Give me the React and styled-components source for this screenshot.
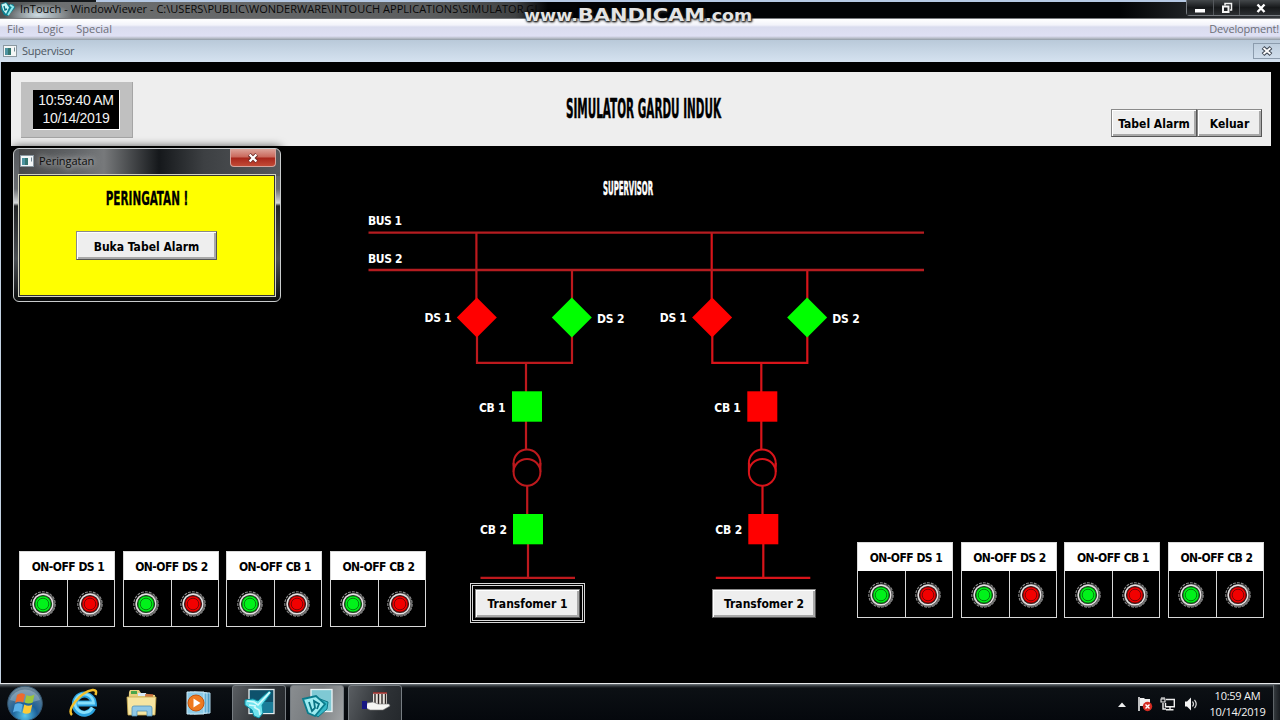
import styled, { createGlobalStyle, css } from "styled-components";

const ui = `"Open Sans", "Noto Sans", sans-serif`;
const bold = `"DejaVu Sans Condensed", "DejaVu Sans", sans-serif`;

const App = () => {
    return (
        <>
        <GlobalStyle />
        <Screen>
            <TitleBar>
                <ViewerLogo />
                <TitleText>InTouch - WindowViewer - C:\USERS\PUBLIC\WONDERWARE\INTOUCH APPLICATIONS\SIMULATOR GI</TitleText>
                <WindowControls />
                <Watermark><Small>www.</Small>BANDICAM<Small>.com</Small></Watermark>
            </TitleBar>

            <MenuBar>
                <MenuItem>File</MenuItem>
                <MenuItem>Logic</MenuItem>
                <MenuItem>Special</MenuItem>
                <MenuItem $right>Development!</MenuItem>
            </MenuBar>

            <ChildBar>
                <WindowIcon />
                <ChildTitle>Supervisor</ChildTitle>
                <ChildClose>
                    <svg width="12" height="10" viewBox="0 0 12 10">
                        <path d="M2 1.500l8 7M10 1.500l-8 7" stroke="#3f4753" strokeWidth="4" />
                        <path d="M2.500 2l7 6M9.500 2l-7 6" stroke="#fff" strokeWidth="1.8" />
                    </svg>
                </ChildClose>
            </ChildBar>

            <Stage>
                <Header>
                    <ClockPanel>
                        <ClockFace>
                            <span>10:59:40 AM</span>
                            <span>10/14/2019</span>
                        </ClockFace>
                    </ClockPanel>
                    <Heading>SIMULATOR GARDU INDUK</Heading>
                    <HeaderButtons>
                        <PushButton $width={86}>Tabel Alarm</PushButton>
                        <PushButton $width={65}>Keluar</PushButton>
                    </HeaderButtons>
                </Header>

                <Mimic>
                    <Diagram />
                    <PanelRow $left={18} $top={405}>
                        <Switches />
                    </PanelRow>
                    <PanelRow $left={856} $top={396}>
                        <Switches />
                    </PanelRow>
                </Mimic>

                <WarningDialog />
            </Stage>

            <Taskbar />
        </Screen>
        </>
    );
};

const Diagram = () => (
    <DiagramColumn>
        <svg width="556" height="437" viewBox="368 146 556 437">
            <SvgLabel x="603" y="194.5" $size={19} $heavy textLength="50" lengthAdjust="spacingAndGlyphs">SUPERVISOR</SvgLabel>
            <SvgLabel x="368" y="225" textLength="34">BUS 1</SvgLabel>
            <SvgLabel x="368" y="263" textLength="34.5">BUS 2</SvgLabel>
            <Bay offset={0} wire="#bd191d" ds1="#ff0000" ds2="#00ff00" cb="#00ff00" />
            <Bay offset={235.3} wire="#d8141a" ds1="#ff0000" ds2="#00ff00" cb="#ff0000" />
            <path d="M368.5 232.6H924.5M368.5 270H924.5" stroke="#b51c20" strokeWidth="2.4" />
        </svg>
        <BayButtons>
            <FocusFrame><PushButton $width={105} $tall>Transfomer 1</PushButton></FocusFrame>
            <PushButton $width={104} $tall>Transfomer 2</PushButton>
        </BayButtons>
    </DiagramColumn>
);

const Bay = ({ offset, wire, ds1, ds2, cb }) => (
    <g transform={`translate(${offset} 0)`}>
        <g fill="none" stroke={wire} strokeWidth="2.2">
            <path d="M476.4 232V300M572 270V300" />
            <path d="M477 335V362.8H572V335" />
            <path d="M526 363V392M526 421V450M527.2 486V515M528 543V578" />
            <path d="M480.5 577.8H575" />
            <circle cx="527" cy="463" r="13.4" strokeWidth="2" />
            <path d="M513.600 463v9M540.400 463v9" strokeWidth="2" />
            <circle cx="527" cy="472.3" r="13.4" strokeWidth="2" fill="#000" />
        </g>
        <path d="M476.8 297.5l20 20-20 20-20-20z" fill={ds1} />
        <path d="M571.8 297.5l20 20-20 20-20-20z" fill={ds2} />
        <rect x="512" y="391.3" width="30" height="30.4" fill={cb} />
        <rect x="513" y="514" width="30" height="30.3" fill={cb} />
        <SvgLabel x="424.5" y="322" textLength="27">DS 1</SvgLabel>
        <SvgLabel x="597" y="323" textLength="27.5">DS 2</SvgLabel>
        <SvgLabel x="479" y="411.5" textLength="26.5">CB 1</SvgLabel>
        <SvgLabel x="480" y="534" textLength="27">CB 2</SvgLabel>
    </g>
);

const Switches = () => (
    <>
        {["DS 1", "DS 2", "CB 1", "CB 2"].map((name) => (
            <SwitchPanel key={name}>
                <SwitchTitle>ON-OFF {name}</SwitchTitle>
                <SwitchCells>
                    <Cell><Lamp light="#00f21a" dark="#087c10" /></Cell>
                    <Cell><Lamp light="#f20000" dark="#780808" /></Cell>
                </SwitchCells>
            </SwitchPanel>
        ))}
    </>
);

const Lamp = ({ light, dark }) => (
    <svg width="28" height="28" viewBox="0 0 28 28">
        <circle cx="14" cy="14" r="12.2" fill="none" stroke="#8b8b8b" strokeWidth="1.1" strokeDasharray="3 1" />
        <circle cx="14.6" cy="14.4" r="10.8" fill="#292929" stroke="#777" strokeWidth="1.2" />
        <circle cx="14" cy="14" r="9.8" fill="#222" stroke="#e6e2e2" strokeWidth="1.4" />
        <circle cx="14" cy="14" r="8" fill={light} stroke={dark} strokeWidth="1" />
        <circle cx="14" cy="14" r="5.8" fill={light} stroke={dark} strokeWidth="1" />
    </svg>
);

const WarningDialog = () => (
    <Dialog>
        <DialogBar>
            <WindowIcon />
            <DialogTitle>Peringatan</DialogTitle>
            <DialogClose>
                <svg width="12" height="10" viewBox="0 0 12 10">
                    <path d="M2.3 1.5l7.4 7M9.7 1.5l-7.4 7" stroke="#6b2a26" strokeWidth="4" />
                    <path d="M2.6 1.5l6.8 7M9.4 1.5l-6.8 7" stroke="#fff" strokeWidth="2.3" />
                </svg>
            </DialogClose>
        </DialogBar>
        <DialogBody>
            <DialogHeading>PERINGATAN !</DialogHeading>
            <PushButton $width={141} $tall>Buka Tabel Alarm</PushButton>
        </DialogBody>
    </Dialog>
);

const ViewerLogo = () => (
    <svg width="16" height="16" viewBox="0 0 16 16">
        <path d="M1 3l5-2 3 3 4-1 2 4-7 8-4-1-3-6z" fill="#0c7f90" />
        <path d="M1.5 3.5L6 2l3 4.5-3 6.5-3-4z" fill="#c9f6f6" />
        <path d="M4 5l1 4 2-1" fill="none" stroke="#08707f" strokeWidth="1.4" />
        <path d="M10 4l3 2-5 8" fill="none" stroke="#8ee9ec" strokeWidth="2" />
    </svg>
);

const WindowIcon = () => (
    <svg width="14" height="12" viewBox="0 0 14 12">
        <rect x=".5" y=".5" width="13" height="11" fill="#f3f6f6" stroke="#8b98a0" />
        <rect x="2" y="3" width="6" height="7" fill="#34766f" />
        <rect x="2" y="3" width="3" height="7" fill="#4d93a0" />
        <path d="M11.5 2.5v4" stroke="#6f8792" />
    </svg>
);

const WindowControls = () => (
    <Controls>
        <Control $width={27}>
            <svg width="12" height="12" viewBox="0 0 12 12"><rect x="1" y="7" width="10" height="3.5" fill="#fff" /></svg>
        </Control>
        <Control $width={26}>
            <svg width="12" height="12" viewBox="0 0 12 12" fill="none" stroke="#f4f4f4">
                <path d="M4 3.5V1.5h6.5V8H9" strokeWidth="1.5" />
                <rect x="2" y="4.5" width="5.5" height="5.5" strokeWidth="2" />
            </svg>
        </Control>
        <Control $width={42}>
            <svg width="12" height="12" viewBox="0 0 12 12"><path d="M2.5 2.5l7 7.5M9.5 2.5l-7 7.5" stroke="#fff" strokeWidth="2.4" /></svg>
        </Control>
    </Controls>
);

const Taskbar = () => (
    <Bar>
        <Pinned>
            <StartOrb />
            <ExplorerE />
            <FolderIcon />
            <PlayerIcon />
        </Pinned>
        <Tasks>
            <Task>
                <svg width="32" height="32" viewBox="0 0 32 32">
                    <rect x="6" y="1.5" width="25" height="24" fill="#0e526c" stroke="#e6eef0" strokeWidth="1.3" />
                    <path d="M7 14h23v11H7z" fill="#1a7c98" />
                    <path d="M2 12l8-1 5 2 11-10 2 2-9 12 1 8-4 5-5-2-2-6-7-5z" fill="#6ee3ee" stroke="#0a8ba0" />
                    <path d="M4 13l7 1 4 3L27 4M11 19l5 3 1 5M6 17l7 1" fill="none" stroke="#d4fbfc" strokeWidth="1.6" />
                </svg>
            </Task>
            <Task $active>
                <svg width="32" height="32" viewBox="0 0 32 32">
                    <rect x="10" y="1.5" width="21" height="22" fill="#7fc9d4" stroke="#eef6f7" strokeWidth="1.3" />
                    <path d="M19 11l8 3-1 7-9 8-4-3z" fill="#35b7c7" stroke="#0d7787" />
                    <path d="M2 11l13-3 9 8-10 12-7-3z" fill="#9decf1" stroke="#0a7c8d" strokeWidth="1.8" />
                    <path d="M8 14l3 9 3-3-1-7 5 3-2 5" fill="none" stroke="#0a7384" strokeWidth="1.8" />
                </svg>
            </Task>
            <Task>
                <svg width="32" height="32" viewBox="0 0 32 32">
                    <path d="M14 5h14v13H14z" fill="#e6e2dc" />
                    <path d="M16 6v12M19.5 6v12M23 6v12M26.5 6v12" stroke="#2c2624" strokeWidth="1.4" />
                    <path d="M14 5h14" stroke="#a3332f" strokeWidth="1.6" />
                    <path d="M8 15l6-1 5 2 11 0 1 2-7 4H11l-4-2z" fill="#f5f5f2" stroke="#777" strokeWidth=".6" />
                    <path d="M3 13h5v8H3z" fill="#161682" />
                </svg>
            </Task>
        </Tasks>
        <Tray>
            <svg width="10" height="8" viewBox="0 0 10 8"><path d="M1 7l4-4.5L9 7z" fill="#eee" /></svg>
            <svg width="16" height="16" viewBox="0 0 16 16">
                <path d="M2 1v14" stroke="#eee" strokeWidth="1.6" />
                <path d="M3 2h4l1 1h5v7H3z" fill="#eee" />
                <circle cx="10.5" cy="10.5" r="4.7" fill="#d52c22" />
                <path d="M8.5 8.5l4 4M12.5 8.5l-4 4" stroke="#fff" strokeWidth="1.4" />
            </svg>
            <svg width="16" height="16" viewBox="0 0 16 16" fill="none" stroke="#eee" strokeWidth="1.4">
                <path d="M6 3.5h8.3v7.2H5.5V7M10 11v2.5M6 13.8h7.5M3 7v6h3" />
                <path d="M1 3h4v3H1zM2 1v2M4 1v2" strokeWidth="1.1" />
            </svg>
            <svg width="16" height="16" viewBox="0 0 16 16" fill="none" stroke="#ddd">
                <path d="M2 5.5h2l4-4v13l-4-4H2z" fill="#f4f4f4" stroke="none" />
                <path d="M9.5 5.5q2 2.5 0 5M11.5 3.8q3.4 4.2 0 8.4" strokeWidth="1.2" />
            </svg>
        </Tray>
        <TrayClock>
            <span>10:59 AM</span>
            <span>10/14/2019</span>
        </TrayClock>
        <ShowDesktop />
    </Bar>
);

const StartOrb = () => (
    <svg width="38" height="36" viewBox="0 0 38 36">
        <defs>
            <radialGradient id="orb" cx=".5" cy=".85" r=".8">
                <stop offset="0" stopColor="#58c8ee" />
                <stop offset=".45" stopColor="#1c5f97" />
                <stop offset="1" stopColor="#6e8798" />
            </radialGradient>
        </defs>
        <circle cx="19" cy="18.5" r="17.3" fill="url(#orb)" stroke="#35566f" />
        <path d="M4 15a15.5 14 0 0 1 30 0q-15 5-30 0z" fill="#c6d9e3" opacity=".35" />
        <path d="M11 10q4-3 8-.5l-1.800 8q-4-2-8 .5z" fill="#ee6a2c" />
        <path d="M20.500 10q4 2 8-.5l-1.800 8q-4 2-8 0z" fill="#9cc63c" />
        <path d="M8.800 19.500q4-2.500 8 0l-1.800 8q-4-2.500-8 0z" fill="#5bb0e8" />
        <path d="M18.300 19.500q4 2.500 8 0l-1.800 8q-4 2.500-8 0z" fill="#fccb37" />
    </svg>
);

const ExplorerE = () => (
    <svg width="32" height="32" viewBox="0 0 32 32">
        <path d="M25 21a9.500 9.500 0 1 1 .8-4.500H9" fill="none" stroke="#2ba3e0" strokeWidth="6" />
        <path d="M24.500 20.500a9.200 9.200 0 1 1 1-4.500H9.500" fill="none" stroke="#86dffb" strokeWidth="2.8" />
        <path d="M4 28Q0 24 7 15 16 4 24.500 3q5-.5 3 5" fill="none" stroke="#f3c02d" strokeWidth="2.500" />
    </svg>
);

const FolderIcon = () => (
    <svg width="32" height="30" viewBox="0 0 32 30">
        <path d="M3 4l1-2h9l2 3 14 2v19H2z" fill="#e8cf7e" />
        <path d="M5 3h6v3H5z" fill="#47a64a" />
        <path d="M12 5h8v3h-8z" fill="#d8e9f6" />
        <path d="M19 6h8v4h-8z" fill="#c3562c" opacity=".7" />
        <path d="M1 9h29l-1 18H2z" fill="#f6e5a1" stroke="#c9a94e" strokeWidth=".8" />
        <path d="M6 28v-8q0-2 2-2h16q2 0 2 2v8h-5v-5H11v5z" fill="#8fc8e6" stroke="#4f91b8" strokeWidth=".8" />
    </svg>
);

const PlayerIcon = () => (
    <svg width="26" height="26" viewBox="0 0 26 26">
        <path d="M8 2l16 1v20l-16 1z" fill="#4f9bc4" stroke="#b2d9ee" />
        <path d="M4 2l17 1v20L4 24z" fill="#5faed6" stroke="#c4e4f4" />
        <path d="M1 2h17v22H1z" fill="#8ecbe8" stroke="#cdeaf6" />
        <circle cx="10" cy="13" r="8" fill="#ee7a20" stroke="#c5550e" />
        <path d="M7.5 8.5l7 4.5-7 4.5z" fill="#fff" />
    </svg>
);

const GlobalStyle = createGlobalStyle`
    * {
        box-sizing: border-box;
    }

    body {
        margin: 0;
        background: #000;
        overflow: hidden;
    }

    svg {
        display: block;
        flex: none;
    }
`

const Screen = styled.div`
    width: 1280px;
    height: 720px;
    display: flex;
    flex-direction: column;
    background: #000;
    font-family: ${ui};
    overflow: hidden;
`

const TitleBar = styled.header`
    position: relative;
    height: 19px;
    flex: none;
    display: flex;
    align-items: center;
    border-bottom: 1px solid #77797c;
    background:
        linear-gradient(90deg, #15181b 96px, #b6c9e4 96px, #b6c9e4 1189px, #15181b 1189px) 0 0 / 100% 2px no-repeat,
        radial-gradient(ellipse 34px 12px at 38px 15px, rgba(220, 236, 244, 0.9), transparent),
        linear-gradient(90deg, #4c4f50, #6e7071 60px, #5b5d5e 430px, #404243 515px, #020305 548px, #020305 1120px, #24272a 1200px, #33363a);
`

const TitleText = styled.span`
    margin-left: 4px;
    font-size: 11px;
    line-height: 16px;
    letter-spacing: 0.015px;
    color: #080808;
    white-space: nowrap;
`

const Controls = styled.div`
    align-self: flex-start;
    display: flex;
    margin: 0 -2px 0 auto;
    height: 16px;
    border: 1px solid #777b80;
    border-width: 0 0 1px 1px;
    border-radius: 0 0 0 4px;
`

const Control = styled.div`
    width: ${(p) => p.$width}px;
    display: flex;
    justify-content: center;
    align-items: center;
    border-right: 1px solid #55595d;
    background: linear-gradient(#44484b, #17191b 50%, #2b2e31);
`

const Watermark = styled.div`
    position: absolute;
    left: 524px;
    top: 5px;
    display: flex;
    align-items: baseline;
    font: bold 18px/20px "DejaVu Sans", sans-serif;
    color: #e4e4e4;
    text-shadow: 0 0 2px #000, 1px 1px 2px #222, 0 1px 2px #444;
    transform: scaleX(1.163);
    transform-origin: left;
    z-index: 5;
`

const Small = styled.span`
    font-size: 15px;
`

const MenuBar = styled.nav`
    height: 21px;
    flex: none;
    display: flex;
    align-items: center;
    gap: 13px;
    padding: 0 1px 2px 7px;
    background: linear-gradient(#fff, #f2f3fa 6px, #d9dcee 8px, #dfe0f4 17px, #a8afb8 20px, #8d99a6);
`

const MenuItem = styled.span`
    font-size: 11px;
    letter-spacing: -0.05px;
    color: #6d6f78;
    ${(p) => p.$right && css`
        margin-left: auto;
        letter-spacing: -0.18px;
    `}
`

const ChildBar = styled.div`
    height: 22px;
    flex: none;
    display: flex;
    align-items: center;
    padding: 0 0 1px 3px;
    background: linear-gradient(#b9c9d9, #c6d5e4 10px, #d5e2f0);
`

const ChildTitle = styled.span`
    margin-left: 5px;
    font-size: 11px;
    letter-spacing: -0.25px;
    color: #4d5662;
`

const ChildClose = styled.div`
    margin-left: auto;
    width: 27px;
    height: 16px;
    display: flex;
    align-items: center;
    justify-content: center;
    border: 1px solid #8c9cad;
    border-right: none;
`

const Stage = styled.main`
    position: relative;
    height: 621px;
    flex: none;
    padding: 10px 9px 0 10px;
    border-left: 1px solid #c3d2e2;
`

const Header = styled.section`
    height: 74px;
    display: grid;
    grid-template-columns: 1fr auto 1fr;
    padding: 10px 9px 0 10px;
    background: #eee;
`

const ClockPanel = styled.div`
    width: 112px;
    height: 56px;
    padding: 8px 12px;
    background: #c0c0c0;
    border: solid #a5a5a5;
    border-width: 0 1px 1px 0;
`

const ClockFace = styled.div`
    height: 40px;
    width: 87px;
    display: flex;
    flex-direction: column;
    align-items: center;
    padding-top: 1px;
    background: #000;
    border: 1px solid #fff;
    border-width: 0 1px 1px 0;
    color: #f1f1f1;
    font: 14px/18px "Liberation Sans", Arial, sans-serif;
    letter-spacing: -0.3px;
    white-space: nowrap;
`

const squeezed = css`
    font-family: ${bold};
    font-weight: bold;
    font-stretch: condensed;
    white-space: nowrap;
    margin: 0;
`

const Heading = styled.h1`
    ${squeezed}
    width: 155px;
    display: flex;
    justify-content: center;
    margin: 9px 0 0 4px;
    font-size: 27px;
    line-height: 36px;
    color: #000;
    -webkit-text-stroke: 0.5px #000;
    transform: scaleX(0.43);
`

const HeaderButtons = styled.div`
    justify-self: end;
    display: flex;
    margin-top: 27px;
`

const PushButton = styled.button`
    width: ${(p) => p.$width}px;
    height: ${(p) => (p.$tall ? 29 : 28)}px;
    flex: none;
    padding: 2px 0 0;
    background: #eee;
    border: 1px solid #6c6c6c;
    border-color: #8a8a8a #555 #555 #8a8a8a;
    box-shadow: inset 1px 1px 0 #fff, inset -2px -2px 0 #a8a8a8;
    color: #000;
    font-family: ${bold};
    font-size: 12px;
    font-weight: bold;
    font-stretch: condensed;
    white-space: nowrap;
`

const Mimic = styled.section`
    display: grid;

    > * {
        grid-area: 1 / 1;
    }
`

const DiagramColumn = styled.div`
    width: 556px;
    margin-left: 357px;
`

const BayButtons = styled.div`
    display: flex;
    align-items: center;
    gap: 127px;
    margin-left: 102px;
`

const FocusFrame = styled.div`
    width: 115px;
    height: 40px;
    display: flex;
    align-items: center;
    justify-content: center;
    border: 3px double #d8d8d8;
`

const SvgLabel = styled.text`
    font-family: ${bold};
    font-size: ${(p) => p.$size || 12}px;
    font-weight: bold;
    font-stretch: condensed;
    fill: #fff;
    ${(p) => p.$heavy && css`
        stroke: #fff;
        stroke-width: 0.5px;
    `}
`

const PanelRow = styled.div`
    align-self: start;
    justify-self: start;
    display: flex;
    gap: 7.5px;
    margin: ${(p) => p.$top}px 0 0 ${(p) => p.$left - 10}px;
`

const SwitchPanel = styled.div`
    width: 96px;
    height: 76px;
    border: 1px solid #d9d9d9;
    background: #000;
`

const SwitchTitle = styled.div`
    height: 28px;
    display: flex;
    align-items: center;
    justify-content: center;
    padding: 1px 0 0 2px;
    background: #fff;
    color: #000;
    font-family: ${bold};
    font-size: 12px;
    font-weight: bold;
    font-stretch: condensed;
    letter-spacing: -0.52px;
    white-space: nowrap;
`

const SwitchCells = styled.div`
    display: grid;
    grid-template-columns: 47px 47px;
    height: 46px;
`

const Cell = styled.div`
    display: flex;
    align-items: center;
    justify-content: center;
    padding: 1px 2px 0 0;

    & + & {
        padding-right: 3px;
        border-left: 1px solid #d9d9d9;
    }
`

const Dialog = styled.div`
    position: absolute;
    left: 12px;
    top: 86px;
    width: 268px;
    height: 154px;
    padding: 0 4px 4px;
    border: 1px solid #c9cccd;
    border-radius: 6px;
    background:
        linear-gradient(90deg, transparent 5px, #48494a 5px, #606366 60px, #77797b 90px, #15181b 145px, #3d4043 190px, #55585b) 0 0 / 100% 27px no-repeat,
        linear-gradient(#55585c, #6a6d71 40px, #d8dadb 54px, #202224 57px, #4b4f53 110px, #0b0c0d);
    box-shadow: 0 0 8px 2px rgba(0, 0, 0, 0.6);
`

const DialogBar = styled.div`
    height: 25px;
    display: flex;
    align-items: center;
    padding: 0 0 2px 2px;
`

const DialogTitle = styled.span`
    margin-left: 5px;
    font-size: 11px;
    letter-spacing: -0.05px;
    color: #0c0c0c;
    text-shadow: 0 0 6px #ccc, 0 0 8px #bbb;
`

const DialogClose = styled.div`
    align-self: flex-start;
    width: 46px;
    height: 18px;
    margin-left: auto;
    display: flex;
    align-items: center;
    justify-content: center;
    border: 1px solid #d5a49d;
    border-top: none;
    border-radius: 0 0 4px 4px;
    background: linear-gradient(#dda49a, #c9685b 8px, #a8261b 9px, #c24a36);
`

const DialogBody = styled.div`
    height: 123px;
    display: flex;
    flex-direction: column;
    align-items: center;
    border: 1px solid #d4d4c0;
    box-shadow: inset 0 0 0 1px #333;
    background: #ff0;
    padding: 9px 1px 0 0;
`

const DialogHeading = styled.h2`
    ${squeezed}
    display: flex;
    justify-content: center;
    width: 82px;
    margin-bottom: 19px;
    font-size: 20px;
    line-height: 28px;
    transform: scaleX(0.58);
    -webkit-text-stroke: 0.3px #000;
`

const Bar = styled.footer`
    height: 37px;
    flex: none;
    display: flex;
    align-items: flex-start;
    border-top: 1px solid #e6e8ea;
    background: linear-gradient(#70777c, #33383d 2px, #0c1014 4px, #05080d);
    overflow: hidden;
`

const Pinned = styled.div`
    display: flex;
    align-items: center;
    width: 232px;
    height: 36px;
    padding-left: 6px;
    gap: 26px;
    margin-top: 1px;

    svg:first-child {
        margin-right: -2px;
    }

    svg:last-child {
        margin-left: 2px;
    }
`

const Tasks = styled.div`
    display: flex;
    gap: 4px;
    margin-top: 1px;
`

const Task = styled.div`
    width: 54px;
    height: 38px;
    display: flex;
    justify-content: center;
    padding-top: 2px;
    border: 1px solid #777d82;
    border-radius: 3px 3px 0 0;
    background: ${(p) => (p.$active
        ? "linear-gradient(110deg, #898d90, #777b7e 50%, #a2a5a7)"
        : "linear-gradient(110deg, #5a5e62, #2e3236 60%, #24282c)")};
`

const Tray = styled.div`
    display: flex;
    align-items: center;
    gap: 7px;
    height: 36px;
    margin: 2px 0 0 auto;

    svg:first-child {
        margin-right: 3px;
    }
`

const TrayClock = styled.div`
    width: 74px;
    display: flex;
    flex-direction: column;
    align-items: center;
    padding: 4px 0 0 3px;
    color: #f4f4f4;
    font-size: 11px;
    line-height: 16px;
    letter-spacing: -0.25px;
    white-space: nowrap;
`

const ShowDesktop = styled.div`
    width: 7px;
    height: 37px;
    border: 1px solid #5e6468;
    border-right: none;
    background: linear-gradient(90deg, #34393d, #181c20);
`

export default App;
